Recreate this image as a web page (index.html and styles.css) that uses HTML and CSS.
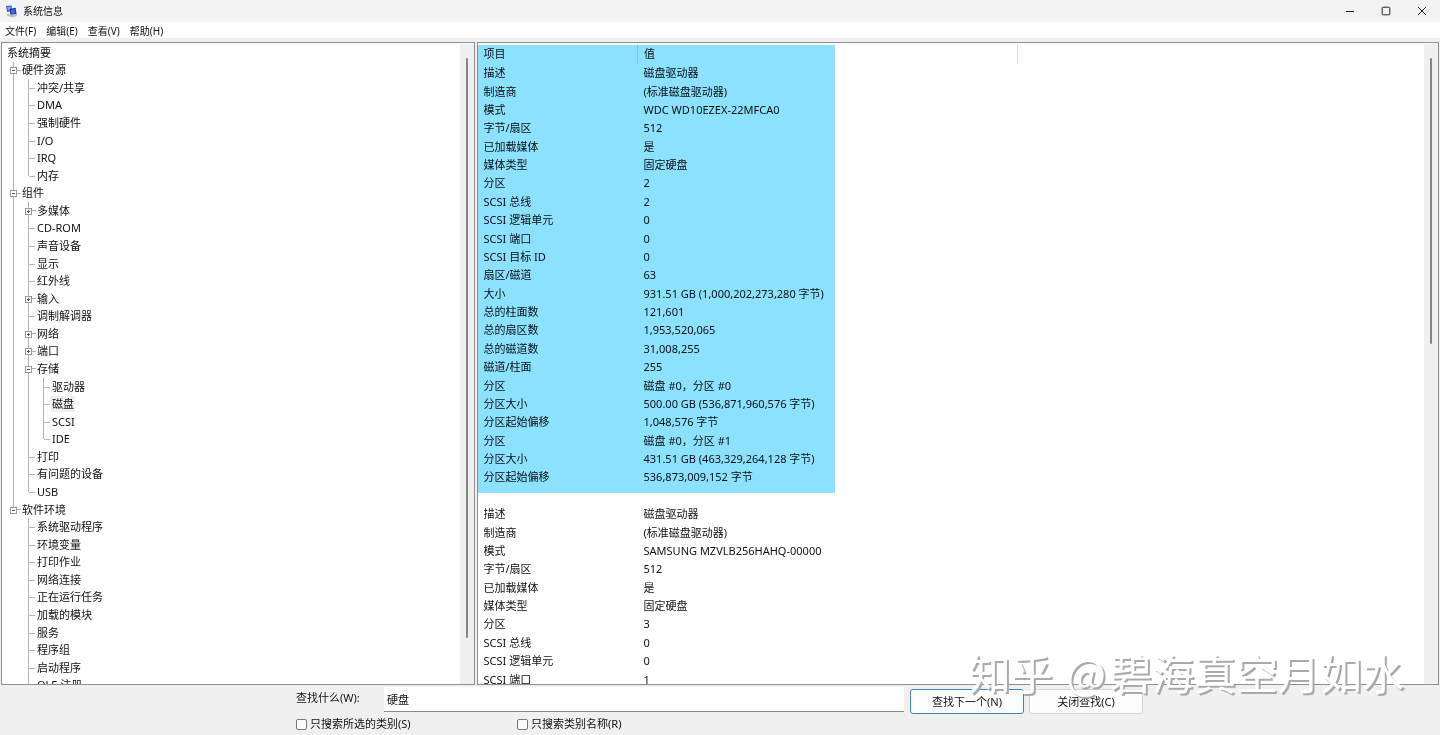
FILE: index.html
```html
<!DOCTYPE html>
<html lang="zh-CN">
<head>
    <meta charset="UTF-8">
    <meta name="viewport" content="width=device-width, initial-scale=1.0">
    <title>系统信息</title>
    <link rel="stylesheet" href="styles.css">
</head>
<body>
    <header class="titlebar">
        <svg class="app-icon" viewBox="0 0 12 12">
            <path d="M1 1l5-.6.6 5L2 6.4z" fill="#2b49c4"/>
            <path d="M2 1.8l3.2-.4.4 3.2-3 .6z" fill="#7fa4f4"/>
            <path d="M4 3.6l5.8-1 .9 5.8-5.6.8z" fill="#1d35a8"/>
            <path d="M5.2 4.6l3.8-.8.6 3.6-3.6.6z" fill="#4068d8"/>
            <path d="M2 7.8l3 1.2 5.6-.6.8 1.8-5.4 1.4-4-2z" fill="#b9bcc6"/>
        </svg>
        <h1>系统信息</h1>
        <div class="window-controls">
            <button type="button" aria-label="最小化"><svg viewBox="0 0 10 10"><path d="M1 5.5h8"/></svg></button>
            <button type="button" aria-label="最大化"><svg viewBox="0 0 10 10"><rect x="1.2" y="1.2" width="7.6" height="7.6" rx="1"/></svg></button>
            <button type="button" aria-label="关闭"><svg viewBox="0 0 10 10"><path d="M1 1l8 8M9 1l-8 8"/></svg></button>
        </div>
    </header>

    <nav class="menubar">
        <button type="button">文件(F)</button>
        <button type="button">编辑(E)</button>
        <button type="button">查看(V)</button>
        <button type="button">帮助(H)</button>
    </nav>

    <main class="panes">
        <section class="pane tree-pane">
            <ul class="tree">
                <li><span class="label">系统摘要</span></li>
                <li><i class="tee box"></i><span class="label">硬件资源</span></li>
                <li><i class="line"></i><i class="tee"></i><span class="label">冲突/共享</span></li>
                <li><i class="line"></i><i class="tee"></i><span class="label">DMA</span></li>
                <li><i class="line"></i><i class="tee"></i><span class="label">强制硬件</span></li>
                <li><i class="line"></i><i class="tee"></i><span class="label">I/O</span></li>
                <li><i class="line"></i><i class="tee"></i><span class="label">IRQ</span></li>
                <li><i class="line"></i><i class="tee end"></i><span class="label">内存</span></li>
                <li><i class="tee box"></i><span class="label">组件</span></li>
                <li><i class="line"></i><i class="tee box plus"></i><span class="label">多媒体</span></li>
                <li><i class="line"></i><i class="tee"></i><span class="label">CD-ROM</span></li>
                <li><i class="line"></i><i class="tee"></i><span class="label">声音设备</span></li>
                <li><i class="line"></i><i class="tee"></i><span class="label">显示</span></li>
                <li><i class="line"></i><i class="tee"></i><span class="label">红外线</span></li>
                <li><i class="line"></i><i class="tee box plus"></i><span class="label">输入</span></li>
                <li><i class="line"></i><i class="tee"></i><span class="label">调制解调器</span></li>
                <li><i class="line"></i><i class="tee box plus"></i><span class="label">网络</span></li>
                <li><i class="line"></i><i class="tee box plus"></i><span class="label">端口</span></li>
                <li><i class="line"></i><i class="tee box"></i><span class="label">存储</span></li>
                <li><i class="line"></i><i class="line"></i><i class="tee"></i><span class="label">驱动器</span></li>
                <li><i class="line"></i><i class="line"></i><i class="tee"></i><span class="label selected">磁盘</span></li>
                <li><i class="line"></i><i class="line"></i><i class="tee"></i><span class="label">SCSI</span></li>
                <li><i class="line"></i><i class="line"></i><i class="tee end"></i><span class="label">IDE</span></li>
                <li><i class="line"></i><i class="tee"></i><span class="label">打印</span></li>
                <li><i class="line"></i><i class="tee"></i><span class="label">有问题的设备</span></li>
                <li><i class="line"></i><i class="tee end"></i><span class="label">USB</span></li>
                <li><i class="tee end box"></i><span class="label">软件环境</span></li>
                <li><i></i><i class="tee"></i><span class="label">系统驱动程序</span></li>
                <li><i></i><i class="tee"></i><span class="label">环境变量</span></li>
                <li><i></i><i class="tee"></i><span class="label">打印作业</span></li>
                <li><i></i><i class="tee"></i><span class="label">网络连接</span></li>
                <li><i></i><i class="tee"></i><span class="label">正在运行任务</span></li>
                <li><i></i><i class="tee"></i><span class="label">加载的模块</span></li>
                <li><i></i><i class="tee"></i><span class="label">服务</span></li>
                <li><i></i><i class="tee"></i><span class="label">程序组</span></li>
                <li><i></i><i class="tee"></i><span class="label">启动程序</span></li>
                <li><i></i><i class="tee"></i><span class="label">OLE 注册</span></li>
            </ul>
            <div class="scrollbar"><div class="thumb"></div></div>
        </section>

        <section class="pane detail-pane">
            <div class="detail">
                <table>
                    <thead>
                        <tr><th>项目</th><th>值</th><th></th></tr>
                    </thead>
                    <tbody>
                        <tr><td>描述</td><td>磁盘驱动器</td></tr>
                        <tr><td>制造商</td><td>(标准磁盘驱动器)</td></tr>
                        <tr><td>模式</td><td>WDC WD10EZEX-22MFCA0</td></tr>
                        <tr><td>字节/扇区</td><td>512</td></tr>
                        <tr><td>已加载媒体</td><td>是</td></tr>
                        <tr><td>媒体类型</td><td>固定硬盘</td></tr>
                        <tr><td>分区</td><td>2</td></tr>
                        <tr><td>SCSI 总线</td><td>2</td></tr>
                        <tr><td>SCSI 逻辑单元</td><td>0</td></tr>
                        <tr><td>SCSI 端口</td><td>0</td></tr>
                        <tr><td>SCSI 目标 ID</td><td>0</td></tr>
                        <tr><td>扇区/磁道</td><td>63</td></tr>
                        <tr><td>大小</td><td>931.51 GB (1,000,202,273,280 字节)</td></tr>
                        <tr><td>总的柱面数</td><td>121,601</td></tr>
                        <tr><td>总的扇区数</td><td>1,953,520,065</td></tr>
                        <tr><td>总的磁道数</td><td>31,008,255</td></tr>
                        <tr><td>磁道/柱面</td><td>255</td></tr>
                        <tr><td>分区</td><td>磁盘 #0，分区 #0</td></tr>
                        <tr><td>分区大小</td><td>500.00 GB (536,871,960,576 字节)</td></tr>
                        <tr><td>分区起始偏移</td><td>1,048,576 字节</td></tr>
                        <tr><td>分区</td><td>磁盘 #0，分区 #1</td></tr>
                        <tr><td>分区大小</td><td>431.51 GB (463,329,264,128 字节)</td></tr>
                        <tr><td>分区起始偏移</td><td>536,873,009,152 字节</td></tr>
                        <tr><td>&nbsp;</td><td></td></tr>
                        <tr><td>描述</td><td>磁盘驱动器</td></tr>
                        <tr><td>制造商</td><td>(标准磁盘驱动器)</td></tr>
                        <tr><td>模式</td><td>SAMSUNG MZVLB256HAHQ-00000</td></tr>
                        <tr><td>字节/扇区</td><td>512</td></tr>
                        <tr><td>已加载媒体</td><td>是</td></tr>
                        <tr><td>媒体类型</td><td>固定硬盘</td></tr>
                        <tr><td>分区</td><td>3</td></tr>
                        <tr><td>SCSI 总线</td><td>0</td></tr>
                        <tr><td>SCSI 逻辑单元</td><td>0</td></tr>
                        <tr><td>SCSI 端口</td><td>1</td></tr>
                    </tbody>
                </table>
            </div>
            <div class="scrollbar"><div class="thumb short"></div></div>
            <div class="highlight"></div>
        </section>
    </main>

    <form class="search">
        <div class="search-row">
            <label class="search-label" for="query">查找什么(W):</label>
            <input class="search-input" id="query" type="text" value="硬盘">
            <button type="button" class="button primary">查找下一个(N)</button>
            <button type="button" class="button">关闭查找(C)</button>
        </div>
        <div class="option-row">
            <label><input type="checkbox">只搜索所选的类别(S)</label>
            <label><input type="checkbox">只搜索类别名称(R)</label>
        </div>
    </form>

    <div class="watermark">知乎 <span>@</span>碧海真空月如水</div>
</body>
</html>
```
FILE: styles.css
```css
*,
*::before,
*::after {
    margin: 0;
    padding: 0;
    box-sizing: border-box;
}

body {
    position: relative;
    display: flex;
    flex-direction: column;
    height: 100vh;
    overflow: hidden;
    background: #f0f0f0;
    color: #111;
    font-family: "Noto Sans", "Noto Sans CJK SC", sans-serif;
    font-size: 11px;
    line-height: 16px;
}

button,
input {
    font: inherit;
    color: inherit;
}

/* Title bar */
.titlebar {
    display: flex;
    align-items: center;
    height: 22px;
    padding-left: 5px;
    background: #f3f3f3;
}

.app-icon {
    width: 13px;
    height: 13px;
    margin-right: 5px;
}

.titlebar h1 {
    font-family: "Open Sans", "Noto Sans CJK SC", sans-serif;
    font-size: 10px;
    font-weight: 400;
}

.window-controls {
    display: flex;
    margin-left: auto;
}

.window-controls button {
    display: flex;
    align-items: center;
    justify-content: center;
    width: 36px;
    height: 22px;
    background: none;
    border: none;
}

.window-controls svg {
    width: 10px;
    height: 10px;
    fill: none;
    stroke: #222;
}

/* Menu */
.menubar {
    display: flex;
    gap: 10px;
    height: 16px;
    padding: 1px 0 0 5px;
    background: #fff;
}

.menubar button {
    background: none;
    border: none;
    font-size: 10px;
    line-height: 16px;
}

/* Panes */
.panes {
    display: flex;
    flex: 1;
    gap: 2px;
    min-height: 0;
    padding: 4px 1px 0;
}

.pane {
    position: relative;
    display: flex;
    min-width: 0;
    overflow: hidden;
    background: #fff;
    border: 1px solid #8e8f94;
}

.tree-pane {
    flex: 0 0 calc(33% - 1px);
    padding-top: 1px;
}

.detail-pane {
    flex: 1;
    padding-top: 1px;
}

.scrollbar {
    flex: 0 0 14px;
    padding: 14px 0 0 6px;
    background: #f0f0f0;
}

.thumb {
    width: 2px;
    height: 580px;
    background: #858585;
    border-radius: 1px;
}

.thumb.short {
    height: 286px;
}

/* Tree */
.tree {
    display: grid;
    grid-template-rows: repeat(37, 1fr);
    flex: 1;
    height: 650px;
    padding-left: 4px;
    list-style: none;
}

.tree li {
    display: flex;
    align-items: center;
    min-height: 0;
}

.tree i {
    position: relative;
    align-self: stretch;
    width: 15px;
}

.line::before,
.tee::before {
    content: "";
    position: absolute;
    top: 0;
    bottom: 0;
    left: 7px;
    width: 1px;
    background: #b4b4b4;
}

.tee.end::before {
    bottom: 50%;
}

.tee::after {
    content: "";
    position: absolute;
    top: 50%;
    left: 8px;
    width: 6px;
    height: 1px;
    background: #b4b4b4;
}

.tree .box {
    background: linear-gradient(#b4b4b4, #b4b4b4) right center / 7px 1px no-repeat;
}

.tee.box::after {
    left: 4px;
    width: 7px;
    height: 7px;
    margin-top: -3px;
    border: 1px solid #999;
    background: linear-gradient(#555, #555) center / 3px 1px no-repeat, #fff;
}

.tee.box.plus::after {
    background:
        linear-gradient(#555, #555) center / 3px 1px no-repeat,
        linear-gradient(#555, #555) center / 1px 3px no-repeat,
        #fff;
}

.label {
    padding: 0 1px;
    white-space: nowrap;
}

.label.selected {
    background: #f0f0f0;
}

/* Details */
.detail {
    flex: 1;
    min-width: 0;
}

table {
    width: 100%;
    height: 645px;
    border-collapse: collapse;
    table-layout: fixed;
}

th,
td {
    padding: 0 0 0 6px;
    font-weight: 400;
    text-align: left;
    white-space: nowrap;
    line-height: 16px;
}

th {
    height: 20px;
    border-right: 1px solid #e0e0e0;
}

th:nth-child(1) {
    width: 160px;
}

th:nth-child(2) {
    width: 380px;
}

th:last-child {
    border-right: none;
}

.highlight {
    position: absolute;
    top: 2px;
    left: 0;
    width: 357px;
    height: 448px;
    background: #8ce1ff;
    mix-blend-mode: multiply;
    pointer-events: none;
}

/* Find bar */
.search {
    padding: 2px 0 3px 296px;
}

.search-row {
    display: flex;
    align-items: center;
    height: 29px;
}

.search-label {
    flex: 0 0 88px;
    padding-bottom: 8px;
}

.search-input {
    width: 520px;
    height: 25px;
    margin-right: 6px;
    padding-left: 3px;
    align-self: flex-start;
    background: #fff;
    border: none;
    border-bottom: 1px solid #8a8a8a;
}

.button {
    width: 114px;
    height: 25px;
    margin-right: 5px;
    background: #fdfdfd;
    border: 1px solid #d4d4d4;
    border-radius: 3px;
}

.button.primary {
    border-color: #3c86b4;
}

.option-row {
    display: flex;
    height: 16px;
}

.option-row label {
    display: flex;
    align-items: center;
    width: 221px;
}

.option-row input {
    appearance: none;
    width: 11px;
    height: 11px;
    margin-right: 3px;
    background: #fafafa;
    border: 1px solid #777;
    border-radius: 2px;
}

.watermark {
    position: absolute;
    right: 36px;
    bottom: 33px;
    color: #fff;
    font-family: "Noto Sans CJK SC", sans-serif;
    font-size: 42px;
    line-height: 60px;
    white-space: nowrap;
    text-shadow: 2px 2px 0 #aaa;
    pointer-events: none;
}

.watermark span {
    margin: 0 4px;
}
```
